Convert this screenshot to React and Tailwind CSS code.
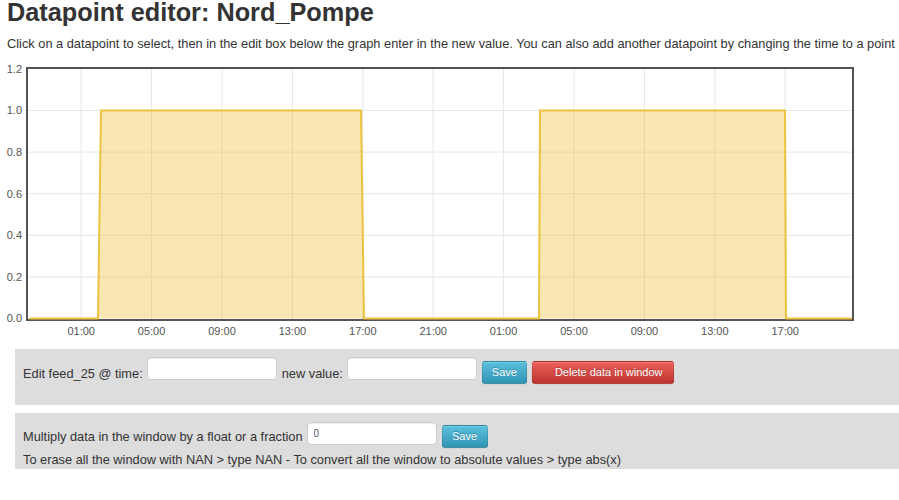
import React from "react";

// y = 0 sits at 318.5, one unit is 208px tall
const Y0 = 318.5;
const UNIT = 208;
const yAt = (v) => Y0 - v * UNIT;

const Y_TICKS = [0, 0.2, 0.4, 0.6, 0.8, 1.0, 1.2];
const X_TICKS = ["01:00", "05:00", "09:00", "13:00", "17:00", "21:00", "01:00", "05:00", "09:00", "13:00", "17:00"];
const xTick = (i) => 81.2 + i * 70.4;

// pump on/off samples, in plot pixels
const SERIES = [
  [29, 0], [98, 0], [101, 1], [361, 1], [364, 0],
  [539, 0], [540, 1], [785, 1], [786, 0], [852, 0],
];

function Graph() {
  const pts = SERIES.map(([x, v]) => `${x},${yAt(v)}`).join(" ");

  return (
    <svg width="870" height="290" viewBox="0 54 870 290" className="block">
      {Y_TICKS.slice(1, -1).map((v) => (
        <line key={v} x1="28" x2="852" y1={yAt(v)} y2={yAt(v)} stroke="#e6e6e6" strokeWidth="1" />
      ))}
      {X_TICKS.map((_, i) => (
        <line key={i} x1={xTick(i)} x2={xTick(i)} y1="69" y2="319" stroke="#e6e6e6" strokeWidth="1" />
      ))}

      <rect x="27" y="68" width="826" height="252" fill="none" stroke="#545454" strokeWidth="2" />

      <polygon points={pts} fill="#edc240" fillOpacity="0.4" />
      <polyline points={pts} fill="none" stroke="#edc240" strokeWidth="2" strokeLinejoin="round" />

      <g fontFamily="'Liberation Sans', Arial, sans-serif" fontSize="11" fill="#545454">
        {Y_TICKS.map((v) => (
          <text key={v} x="22" y={yAt(v) + 3.9} textAnchor="end">
            {v.toFixed(1)}
          </text>
        ))}
        {X_TICKS.map((t, i) => (
          <text key={i} x={xTick(i)} y="335" textAnchor="middle">
            {t}
          </text>
        ))}
      </g>
    </svg>
  );
}

const inputCls =
  "shrink-0 h-[23px] w-[130px] rounded-[4px] border border-[#ccc] bg-white px-[6px] text-[10px] text-[#555] shadow-[inset_0_1px_1px_rgba(0,0,0,0.075)] outline-none";

const btnBase =
  "shrink-0 h-[23px] rounded-[3px] border border-[rgba(0,0,0,0.1)] border-b-[rgba(0,0,0,0.25)] text-[11px] leading-none text-white whitespace-nowrap shadow-[inset_0_1px_0_rgba(255,255,255,0.2),0_1px_2px_rgba(0,0,0,0.05)] [text-shadow:0_-1px_0_rgba(0,0,0,0.25)]";

export default function App() {
  return (
    <div className="w-[899px] h-[500px] overflow-hidden bg-white text-[#333] font-['Liberation_Sans',Arial,sans-serif]">
      <div className="w-[940px]">
        <h2 className="ml-[7px] text-[25.3px] leading-[24px] font-bold">Datapoint editor: Nord_Pompe</h2>
        <p className="ml-[7px] mt-[10px] text-[12.8px] leading-[20px] whitespace-nowrap">
          Click on a datapoint to select, then in the edit box below the graph enter in the new value. You can also add
          another datapoint by changing the time to a point in time that does not yet have a datapoint.
        </p>

        <Graph />

        <div className="ml-[15px] mt-[5px] h-[56px] w-[925px] bg-[#ddd] px-[8px] text-[12.8px]">
          <div className="flex items-start">
            <span className="mt-[15px] leading-[20px] whitespace-nowrap">Edit feed_25 @ time:</span>
            <input className={`${inputCls} ml-[4px] mt-[8px]`} defaultValue="" />
            <span className="ml-[5px] mt-[15px] leading-[20px] whitespace-nowrap">new value:</span>
            <input className={`${inputCls} ml-[4px] mt-[8px]`} defaultValue="" />
            <button className={`${btnBase} ml-[5px] mt-[12px] w-[45px] bg-linear-to-b from-[#5bc0de] to-[#2f96b4]`}>
              Save
            </button>
            <button className={`${btnBase} ml-[5px] mt-[12px] pl-[22px] pr-[10px] bg-linear-to-b from-[#ee5f5b] to-[#bd362f]`}>
              Delete data in window
            </button>
          </div>
        </div>

        <div className="ml-[15px] mt-[8px] h-[56px] w-[925px] overflow-hidden bg-[#ddd] px-[8px] text-[12.8px]">
          <div className="flex items-start">
            <span className="mt-[14px] leading-[20px] whitespace-nowrap">Multiply data in the window by a float or a fraction</span>
            <input className={`${inputCls} ml-[4px] mt-[9px]`} defaultValue="0" />
            <button className={`${btnBase} ml-[5px] mt-[12px] w-[46px] bg-linear-to-b from-[#5bc0de] to-[#2f96b4]`}>
              Save
            </button>
          </div>
          <p className="mt-[2px] leading-[20px] whitespace-nowrap">
            To erase all the window with NAN &gt; type NAN - To convert all the window to absolute values &gt; type abs(x)
          </p>
        </div>
      </div>
    </div>
  );
}
